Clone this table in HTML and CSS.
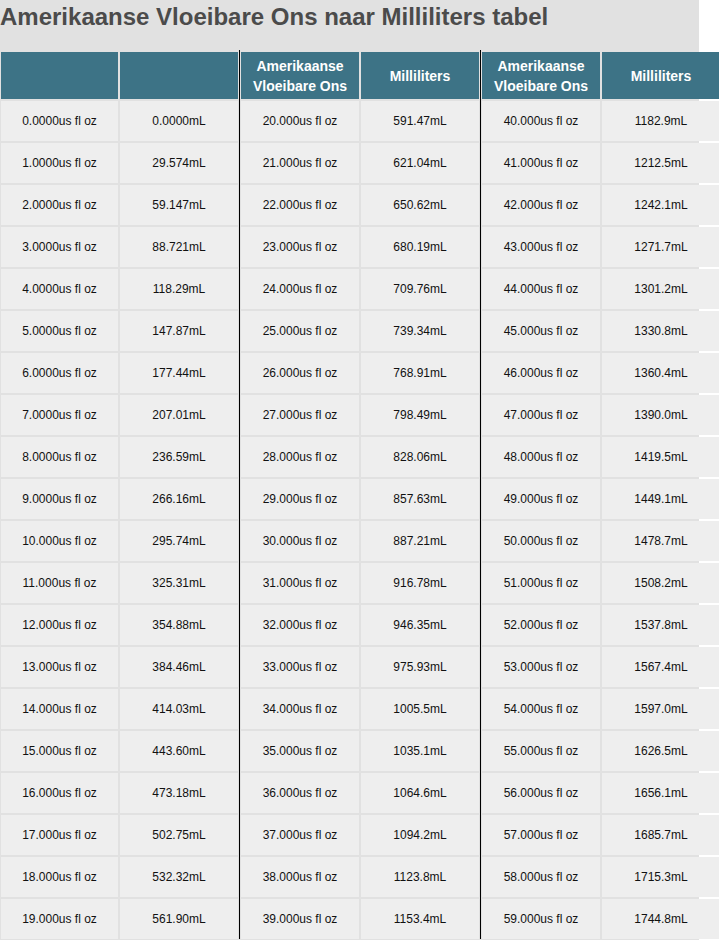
FILE: index.html
```html
<!DOCTYPE html>
<html lang="nl">
<head>
<meta charset="utf-8">
<title>Amerikaanse Vloeibare Ons naar Milliliters tabel</title>
<link rel="stylesheet" href="styles.css">
</head>
<body>
<div class="page">
<h1 class="title">Amerikaanse Vloeibare Ons naar Milliliters tabel</h1>
<div class="tables">
<div class="group g1">
<div class="th"></div><div class="th"></div>
<div class="td">0.0000us fl oz</div><div class="td">0.0000mL</div>
<div class="td">1.0000us fl oz</div><div class="td">29.574mL</div>
<div class="td">2.0000us fl oz</div><div class="td">59.147mL</div>
<div class="td">3.0000us fl oz</div><div class="td">88.721mL</div>
<div class="td">4.0000us fl oz</div><div class="td">118.29mL</div>
<div class="td">5.0000us fl oz</div><div class="td">147.87mL</div>
<div class="td">6.0000us fl oz</div><div class="td">177.44mL</div>
<div class="td">7.0000us fl oz</div><div class="td">207.01mL</div>
<div class="td">8.0000us fl oz</div><div class="td">236.59mL</div>
<div class="td">9.0000us fl oz</div><div class="td">266.16mL</div>
<div class="td">10.000us fl oz</div><div class="td">295.74mL</div>
<div class="td">11.000us fl oz</div><div class="td">325.31mL</div>
<div class="td">12.000us fl oz</div><div class="td">354.88mL</div>
<div class="td">13.000us fl oz</div><div class="td">384.46mL</div>
<div class="td">14.000us fl oz</div><div class="td">414.03mL</div>
<div class="td">15.000us fl oz</div><div class="td">443.60mL</div>
<div class="td">16.000us fl oz</div><div class="td">473.18mL</div>
<div class="td">17.000us fl oz</div><div class="td">502.75mL</div>
<div class="td">18.000us fl oz</div><div class="td">532.32mL</div>
<div class="td">19.000us fl oz</div><div class="td">561.90mL</div>
</div>
<div class="group g2">
<div class="th">Amerikaanse<br>Vloeibare Ons</div><div class="th">Milliliters</div>
<div class="td">20.000us fl oz</div><div class="td">591.47mL</div>
<div class="td">21.000us fl oz</div><div class="td">621.04mL</div>
<div class="td">22.000us fl oz</div><div class="td">650.62mL</div>
<div class="td">23.000us fl oz</div><div class="td">680.19mL</div>
<div class="td">24.000us fl oz</div><div class="td">709.76mL</div>
<div class="td">25.000us fl oz</div><div class="td">739.34mL</div>
<div class="td">26.000us fl oz</div><div class="td">768.91mL</div>
<div class="td">27.000us fl oz</div><div class="td">798.49mL</div>
<div class="td">28.000us fl oz</div><div class="td">828.06mL</div>
<div class="td">29.000us fl oz</div><div class="td">857.63mL</div>
<div class="td">30.000us fl oz</div><div class="td">887.21mL</div>
<div class="td">31.000us fl oz</div><div class="td">916.78mL</div>
<div class="td">32.000us fl oz</div><div class="td">946.35mL</div>
<div class="td">33.000us fl oz</div><div class="td">975.93mL</div>
<div class="td">34.000us fl oz</div><div class="td">1005.5mL</div>
<div class="td">35.000us fl oz</div><div class="td">1035.1mL</div>
<div class="td">36.000us fl oz</div><div class="td">1064.6mL</div>
<div class="td">37.000us fl oz</div><div class="td">1094.2mL</div>
<div class="td">38.000us fl oz</div><div class="td">1123.8mL</div>
<div class="td">39.000us fl oz</div><div class="td">1153.4mL</div>
</div>
<div class="group g3">
<div class="th">Amerikaanse<br>Vloeibare Ons</div><div class="th">Milliliters</div>
<div class="td">40.000us fl oz</div><div class="td">1182.9mL</div>
<div class="td">41.000us fl oz</div><div class="td">1212.5mL</div>
<div class="td">42.000us fl oz</div><div class="td">1242.1mL</div>
<div class="td">43.000us fl oz</div><div class="td">1271.7mL</div>
<div class="td">44.000us fl oz</div><div class="td">1301.2mL</div>
<div class="td">45.000us fl oz</div><div class="td">1330.8mL</div>
<div class="td">46.000us fl oz</div><div class="td">1360.4mL</div>
<div class="td">47.000us fl oz</div><div class="td">1390.0mL</div>
<div class="td">48.000us fl oz</div><div class="td">1419.5mL</div>
<div class="td">49.000us fl oz</div><div class="td">1449.1mL</div>
<div class="td">50.000us fl oz</div><div class="td">1478.7mL</div>
<div class="td">51.000us fl oz</div><div class="td">1508.2mL</div>
<div class="td">52.000us fl oz</div><div class="td">1537.8mL</div>
<div class="td">53.000us fl oz</div><div class="td">1567.4mL</div>
<div class="td">54.000us fl oz</div><div class="td">1597.0mL</div>
<div class="td">55.000us fl oz</div><div class="td">1626.5mL</div>
<div class="td">56.000us fl oz</div><div class="td">1656.1mL</div>
<div class="td">57.000us fl oz</div><div class="td">1685.7mL</div>
<div class="td">58.000us fl oz</div><div class="td">1715.3mL</div>
<div class="td">59.000us fl oz</div><div class="td">1744.8mL</div>
</div>
</div>
</div>
</body>
</html>
```
FILE: styles.css
```css
html, body {
  margin: 0;
  padding: 0;
  background: #ffffff;
}
body {
  font-family: "Liberation Sans", Arial, sans-serif;
}
.page {
  width: 699px;
  background: #e1e1e1;
  min-height: 940px;
}
.title {
  margin: 0;
  padding: 2px 0 0 0;
  height: 50px;
  box-sizing: border-box;
  font-size: 24px;
  line-height: 30px;
  font-weight: bold;
  color: #4b4b4b;
  white-space: nowrap;
}
.tables {
  display: flex;
  width: 720px;
}
.group {
  display: grid;
  grid-auto-rows: 40px;
  grid-template-rows: 47px;
  gap: 2px;
  padding-top: 2px;
}
.g1 {
  margin-left: 1px;
  grid-template-columns: 117px 118px;
}
.g2, .g3 {
  margin-left: 1px;
  padding-left: 1px;
  border-left: 1px solid #000;
  grid-template-columns: 118px 118px;
}
.th {
  background: #3d7386;
  color: #ffffff;
  font-weight: bold;
  font-size: 14px;
  line-height: 20px;
  display: flex;
  align-items: center;
  justify-content: center;
  text-align: center;
}
.td {
  background: #eeeeee;
  color: #111111;
  font-size: 12px;
  display: flex;
  align-items: center;
  justify-content: center;
}
```
